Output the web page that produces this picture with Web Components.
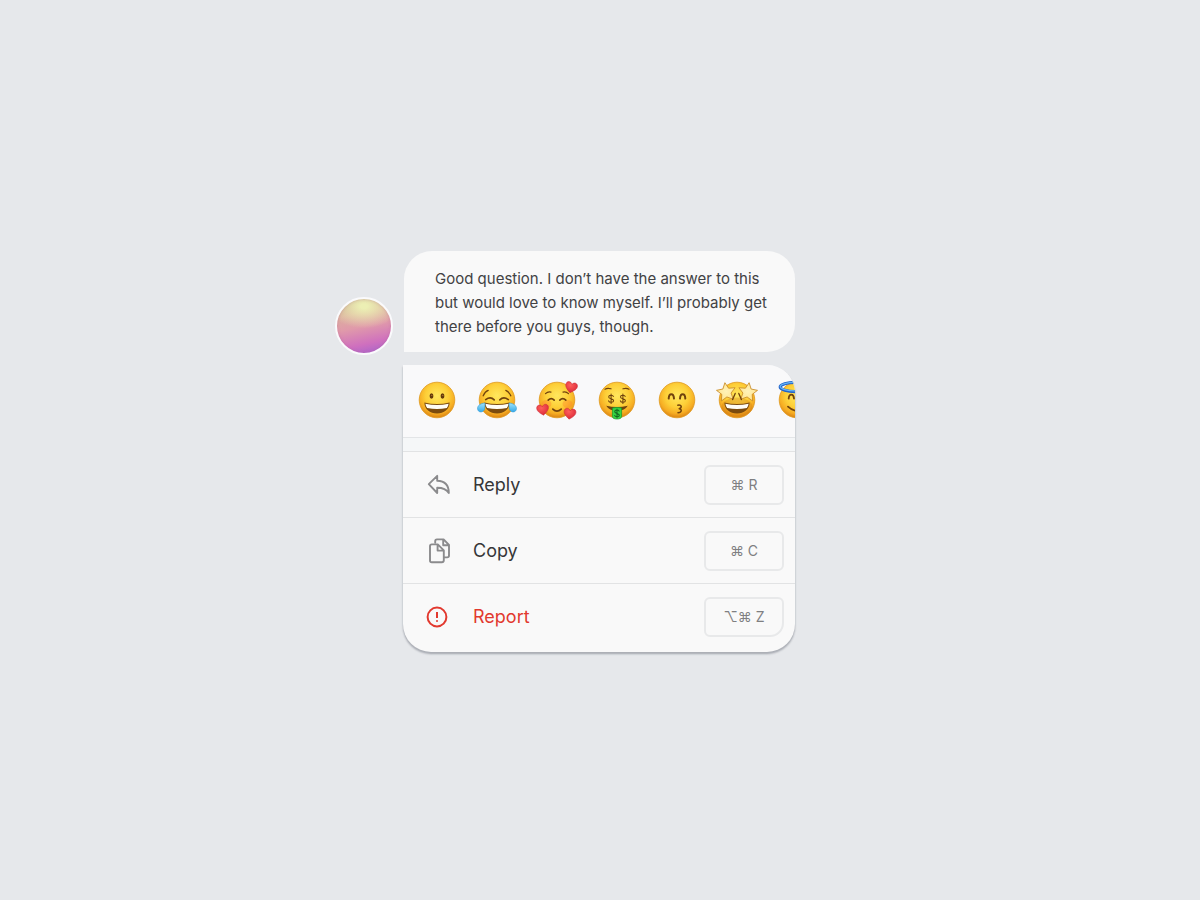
<!DOCTYPE html>
<html lang="en">
<head>
<meta charset="utf-8">
<meta name="viewport" content="width=device-width, initial-scale=1">
<title>Message actions</title>
<style>
  html, body { margin: 0; background: #e6e8eb; }
  body { font-family: Inter, "Liberation Sans", sans-serif; color: #424244; }
</style>
</head>
<body>
<message-thread>
  <user-avatar slot="avatar"></user-avatar>
  <chat-bubble>Good question. I don’t have the answer to this but would love to know myself. I’ll probably get there before you guys, though.</chat-bubble>
  <action-menu slot="menu">
    <emoji-button slot="reactions" name="grin" label="Grinning"></emoji-button>
    <emoji-button slot="reactions" name="joy" label="Tears of joy"></emoji-button>
    <emoji-button slot="reactions" name="love" label="Smiling with hearts"></emoji-button>
    <emoji-button slot="reactions" name="money" label="Money mouth"></emoji-button>
    <emoji-button slot="reactions" name="kiss" label="Kissing"></emoji-button>
    <emoji-button slot="reactions" name="star" label="Star-struck"></emoji-button>
    <emoji-button slot="reactions" name="halo" label="Halo"></emoji-button>
    <menu-action icon="reply" keys="⌘ R">Reply</menu-action>
    <menu-action icon="copy" keys="⌘ C">Copy</menu-action>
    <menu-action icon="report" keys="⌥⌘ Z" danger>Report</menu-action>
  </action-menu>
</message-thread>

<script>
const define = (name, html) => {
  const template = document.createElement('template');
  template.innerHTML = html;
  customElements.define(name, class extends HTMLElement {
    constructor() {
      super();
      this.attachShadow({ mode: 'open' }).append(template.content.cloneNode(true));
    }
  });
};

define('message-thread', `
  <style>
    :host {
      box-sizing: border-box; min-height: 100vh; padding: 3px 2px 0 0;
      display: grid; grid-template-columns: 1fr minmax(0, 392px) 1fr;
      align-content: center; row-gap: 13px;
    }
    .avatar { display: flex; justify-content: flex-end; align-items: flex-end; padding-right: 10px; margin-bottom: -3px; }
    .menu { grid-column: 2; }
  </style>
  <div class="avatar"><slot name="avatar"></slot></div>
  <slot></slot>
  <div class="menu"><slot name="menu"></slot></div>
`);

define('user-avatar', `
  <style>
    :host {
      display: block; box-sizing: border-box; width: 58px; height: 58px;
      border: 2px solid #fafafc; border-radius: 50%;
      background:
        radial-gradient(ellipse 60% 38% at 50% 16%, #ecefb4 10%, #ecefb400 100%),
        linear-gradient(168deg, #b9a880 2%, #dcae9f 30%, #e09aaa 50%, #cf70be 76%, #9a5fd0 100%);
      background-origin: border-box;
      box-shadow: inset 0 0 3px #b0609066;
    }
  </style>
`);

define('chat-bubble', `
  <style>
    :host {
      display: block; background: #f9f9f9; border-radius: 28px 28px 28px 0;
      margin-left: 1px;
      padding: 16px 27px 13px 31px; font-size: 15px; line-height: 24px; font-weight: 400;
    }
    p { margin: 0; }
  </style>
  <p><slot></slot></p>
`);

define('action-menu', `
  <style>
    :host {
      display: block; background: #f9f9f9; border-radius: 0 28px 28px 28px; overflow: hidden;
      box-shadow: 0 2px 2px #abaeb5, 0 2px 2px #c9ccd1;
    }
    .reactions { display: flex; gap: 12px; height: 61px; padding: 11px 0 0 10px; overflow: hidden; background: #f9f9fa; }
    .gap { height: 13px; border-top: 1px solid #e3e5e7; background: #f5f7f8; }
    .actions { padding-bottom: 3px; }
  </style>
  <div class="reactions"><slot name="reactions"></slot></div>
  <div class="gap"></div>
  <div class="actions"><slot></slot></div>
`);

const FACE = '<circle r="17.8" fill="url(#skin)" stroke="#e09a1e" stroke-width=".8"/>';
const GRIN = `<path d="M-12.6 2.6Q0 5.6 12.6 2.6C12.6 9.4 7 13.6 0 13.6S-12.6 9.4-12.6 2.6Z" fill="#7b4b0e"/>
  <path d="M-11.6 3.7Q0 6.4 11.6 3.7Q11.2 6.7 9.8 8Q0 10-9.8 8Q-11.2 6.7-11.6 3.7Z" fill="#fffdf6"/>`;
const heart = (x, y, r) => `<path transform="translate(${x} ${y}) rotate(${r})" d="M0 5.6C-4 2.8-6.2.4-5.9-2.2C-5.5-5.4-1.4-6 0-2.8C1.4-6 5.5-5.4 5.9-2.2C6.2.4 4 2.8 0 5.6Z" fill="url(#heart)" stroke="#c92a36" stroke-width=".5"/>`;
const star = (x, y, r) => `<path transform="translate(${x} ${y}) rotate(${r})" d="M0-9.4L2.9-3.4L9.4-3L4.7 1.7L6 8.2L0 5L-6 8.2L-4.7 1.7L-9.4-3L-2.9-3.4Z" fill="url(#gold)" stroke="#c98a26" stroke-width=".8" stroke-linejoin="round"/>`;
const dollar = (x, y, s, c) => `<path transform="translate(${x} ${y}) scale(${s})" d="M2.5-2.6C2-4.3-2.6-4.6-2.7-2C-2.7.4 2.9-.4 2.8 2.2C2.7 4.8-2.4 4.4-2.8 2.4M0-5.2V5.2" fill="none" stroke="${c}" stroke-width="1.2" stroke-linecap="round"/>`;
const INK = 'fill="none" stroke="#70420d" stroke-linecap="round" stroke-linejoin="round"';
const TEAR = 'd="M-12 3C-16.5 3.4-19.8 5.5-19.4 9C-19 12.8-13.6 13-12.4 9C-11.9 7-12.2 5-12 3Z" fill="url(#water)" stroke="#2d9bd8" stroke-width=".6"';

const EMOJI = {
  grin: `${FACE}<ellipse cx="-5.5" cy="-4" rx="1.9" ry="2.7" fill="#653a0b"/><ellipse cx="5.5" cy="-4" rx="1.9" ry="2.7" fill="#653a0b"/>
    <circle cx="-5.2" cy="-4.6" r=".6" fill="#b87c36"/><circle cx="5.8" cy="-4.6" r=".6" fill="#b87c36"/>${GRIN}`,
  joy: `${FACE}${GRIN}<path d="M-11.3-.4Q-6.5-3.8-2.8-.2M11.3-.4Q6.5-3.8 2.8-.2" ${INK} stroke-width="1.7"/>
    <path d="M-13.8-4.2Q-12-8.4-8.8-9.6M13.8-4.2Q12-8.4 8.8-9.6" ${INK} stroke-width="1.3"/>
    <path ${TEAR}/><path transform="scale(-1 1)" ${TEAR}/>`,
  love: `${FACE}<ellipse cx="-10.5" cy="4" rx="5" ry="4" fill="#ff7a2b" opacity=".35"/><ellipse cx="10.5" cy="4" rx="5" ry="4" fill="#ff7a2b" opacity=".35"/>
    <path d="M-8.8.2Q-5.8-2.8-2.8.2M2.8.2Q5.8-2.8 8.8.2M-4.2 9.2Q0 13.2 4.2 9.2" ${INK} stroke-width="1.7"/>
    <path d="M-11.5-6.4Q-9-8.8-6-7.9M11.5-6.4Q9-8.8 6-7.9" ${INK} stroke-width="1.2"/>
    ${heart(14.2, -12.8, 14)}${heart(-14.2, 9.6, -8)}${heart(12.8, 13.6, 8)}`,
  money: `${FACE}<path d="M-12-10.8Q-9.5-12.4-6-11.2M12-10.8Q9.5-12.4 6-11.2" ${INK} stroke-width="1.2"/>
    ${dollar(-5.9, -1.3, .9, '#70420d')}${dollar(5.9, -1.3, .9, '#70420d')}
    <path d="M-10.8 5.8Q0 8.4 10.8 5.8Q8 10.7 0 10.8Q-8 10.7-10.8 5.8Z" fill="#70420d"/>
    <path d="M-4.6 8Q0 6.7 4.6 8V16.5Q4.4 19 0 19T-4.6 16.5Z" fill="#36d443" stroke="#16972a" stroke-width=".7"/>
    ${dollar(0, 13.4, .85, '#14661f')}`,
  kiss: `${FACE}<path d="M-8.3-1.4C-8-7.1-3.4-7.1-3-1.4M8.3-1.4C8-7.1 3.4-7.1 3-1.4" ${INK} stroke-width="2"/>
    <path d="M.8 5.2C4.2 4.5 5.8 7.3 2.2 8.8C5.3 9.3 4.8 12.5 1 12.8" ${INK} stroke-width="1.5"/>`,
  star: `${FACE}<ellipse cy="7" rx="15.5" ry="9.5" fill="#c96f0c" opacity=".3"/>${GRIN}
    ${star(-10.8, -8, -8)}${star(10.8, -8, 8)}
    <path d="M-4.4-.4L-1.8-6.6M4.4-.4L1.8-6.6" ${INK} stroke-width="1.3"/>`,
  halo: `${FACE}<path d="M-8.3-1.4C-8-6.6-3.4-6.6-3-1.4M-9 6.6Q0 15 9 6.6" ${INK} stroke-width="1.8"/>
    <ellipse cx="-1" cy="-13" rx="15.8" ry="4.6" fill="none" stroke="#2463c9" stroke-width="3.2"/>
    <ellipse cx="-1" cy="-13.4" rx="15.8" ry="4.3" fill="none" stroke="#64b5f4" stroke-width="1.3"/>`
};

const DEFS = `<defs>
  <radialGradient id="skin" cx=".5" cy=".38" r=".64"><stop offset="0" stop-color="#ffe75e"/><stop offset=".5" stop-color="#fdcf38"/><stop offset=".78" stop-color="#f6ad23"/><stop offset="1" stop-color="#d67b10"/></radialGradient>
  <radialGradient id="heart" cx=".4" cy=".3" r=".8"><stop offset="0" stop-color="#ff5f5c"/><stop offset="1" stop-color="#d62334"/></radialGradient>
  <radialGradient id="gold" cx=".5" cy=".5" r=".6"><stop offset="0" stop-color="#fff2b8"/><stop offset="1" stop-color="#ffe48c"/></radialGradient>
  <linearGradient id="water" x1="0" y1="0" x2="0" y2="1"><stop offset="0" stop-color="#9fe2fb"/><stop offset="1" stop-color="#35aae8"/></linearGradient>
</defs>`;

customElements.define('emoji-button', class extends HTMLElement {
  connectedCallback() {
    if (this.shadowRoot) return;
    this.attachShadow({ mode: 'open' }).innerHTML = `
      <style>
        :host { display: block; flex: none; }
        button { display: block; width: 48px; height: 48px; padding: 0; border: 0; background: none; cursor: pointer; }
        svg { display: block; width: 48px; height: 48px; }
      </style>
      <button type="button" aria-label="${this.getAttribute('label')}">
        <svg viewBox="-24 -24 48 48" aria-hidden="true">${DEFS}${EMOJI[this.getAttribute('name')]}</svg>
      </button>`;
  }
});

const ICONS = {
  reply: `<path d="M3.8 13.2L12.2 4.8V9.8C19.2 10 23.8 14 23.8 22C21.4 18 18 16.8 12.2 16.8V22Z"/>`,
  copy: `<path d="M10.2 5.8V4.2Q10.2 2.4 12 2.4H18.6L24 8V18.6Q24 20.4 22.2 20.4H19.2M18.2 2.8V8.3H23.6"/>
    <path d="M6.8 7.4H12.8L18.8 13.4V23.2Q18.8 25.2 16.8 25.2H6.8Q5 25.2 5 23.4V9.2Q5 7.4 6.8 7.4ZM12.6 7.8V13.6H18.4"/>`,
  report: `<circle cx="12" cy="14" r="9.4" stroke-width="2"/><path d="M12 9V15M12 17.2V18.8" stroke-width="2" stroke-linecap="butt"/>`
};

customElements.define('menu-action', class extends HTMLElement {
  connectedCallback() {
    if (this.shadowRoot) return;
    this.attachShadow({ mode: 'open' }).innerHTML = `
      <style>
        :host { display: block; border-top: 1px solid #e2e3e4; color: #363638; --icon: #8b8b8d; }
        :host([danger]) { color: #e2392f; --icon: #e2392f; }
        button {
          display: flex; align-items: center; width: 100%; height: 65px; padding: 0 11px 0 22px;
          border: 0; background: none; font: inherit; font-size: 18px; line-height: 24px;
          color: inherit; text-align: left; cursor: pointer;
        }
        svg { width: 28px; height: 28px; margin-right: 20px; fill: none; stroke: var(--icon); stroke-width: 1.9; stroke-linecap: round; stroke-linejoin: round; }
        .label { flex: 1; font-weight: 400; }
        kbd {
          box-sizing: border-box; width: 80px; height: 40px; border: 2px solid #e8e9ea; border-radius: 6px;
          display: grid; place-items: center; font-family: inherit; font-size: 14px; line-height: 20px; font-weight: 400; color: #7f7f81;
        }
        :host([danger]) kbd { border-bottom-right-radius: 14px; }
      </style>
      <button type="button">
        <svg viewBox="0 0 28 28" aria-hidden="true">${ICONS[this.getAttribute('icon')]}</svg>
        <span class="label"><slot></slot></span>
        <kbd>${this.getAttribute('keys')}</kbd>
      </button>`;
  }
});
</script>
</body>
</html>
